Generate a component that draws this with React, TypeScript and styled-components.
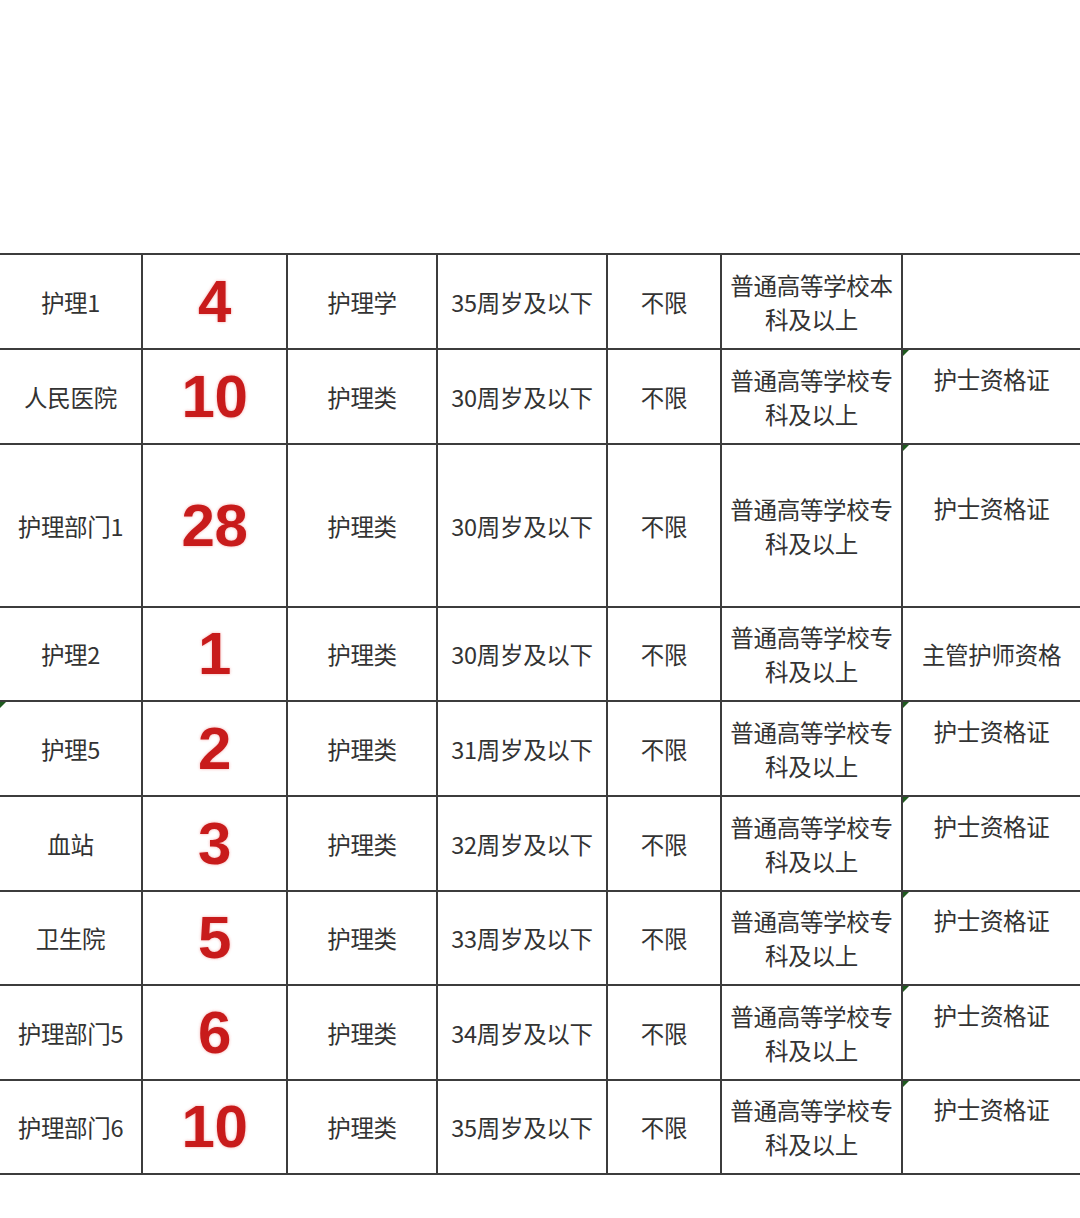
import React from "react";
import styled, { createGlobalStyle } from "styled-components";

interface Post {
  unit: string;
  count: number;
  major: string;
  age: string;
  edu: string;
  cert: string;
  raised: boolean;
  marker: boolean;
  leftMarker?: boolean;
}

const posts: Post[] = [
  { unit: "护理1", count: 4, major: "护理学", age: "35周岁及以下", edu: "本", cert: "", raised: false, marker: false },
  { unit: "人民医院", count: 10, major: "护理类", age: "30周岁及以下", edu: "专", cert: "护士资格证", raised: true, marker: true },
  { unit: "护理部门1", count: 28, major: "护理类", age: "30周岁及以下", edu: "专", cert: "护士资格证", raised: true, marker: true },
  { unit: "护理2", count: 1, major: "护理类", age: "30周岁及以下", edu: "专", cert: "主管护师资格", raised: false, marker: false },
  { unit: "护理5", count: 2, major: "护理类", age: "31周岁及以下", edu: "专", cert: "护士资格证", raised: true, marker: true, leftMarker: true },
  { unit: "血站", count: 3, major: "护理类", age: "32周岁及以下", edu: "专", cert: "护士资格证", raised: true, marker: true },
  { unit: "卫生院", count: 5, major: "护理类", age: "33周岁及以下", edu: "专", cert: "护士资格证", raised: true, marker: true },
  { unit: "护理部门5", count: 6, major: "护理类", age: "34周岁及以下", edu: "专", cert: "护士资格证", raised: true, marker: true },
  { unit: "护理部门6", count: 10, major: "护理类", age: "35周岁及以下", edu: "专", cert: "护士资格证", raised: true, marker: true },
];

const GlobalStyle = createGlobalStyle`
  body {
    margin: 0;
    background: #ffffff;
    font-family: "Noto Sans CJK SC", "Noto Sans", sans-serif;
  }
`;

const Page = styled.div`
  width: 1080px;
  padding-top: 253px;
  padding-bottom: 43px;
`;

const Grid = styled.div`
  display: grid;
  grid-template-columns: 141px 143px 148px 168px 112px 179px 177px;
  grid-template-rows: 93px 93px 161px 92px 93px 93px 92px 93px 92px;
  gap: 2px;
  padding: 2px 0;
  background: #3c3c3c;
`;

const Row = styled.div`
  display: contents;
`;

const Cell = styled.div<{ $raised?: boolean; $marker?: boolean }>`
  position: relative;
  display: flex;
  align-items: center;
  justify-content: center;
  text-align: center;
  background: #ffffff;
  color: #333333;
  font-size: 23.5px;
  line-height: 34px;
  letter-spacing: -0.3px;
  padding-bottom: ${({ $raised }) => ($raised ? "36px" : "0")};

  &::before {
    content: "";
    display: ${({ $marker }) => ($marker ? "block" : "none")};
    position: absolute;
    left: 0;
    top: 0;
    border-top: 6px solid #1f5a1f;
    border-right: 6px solid transparent;
  }
`;

const Count = styled.span`
  font-family: "Liberation Sans", Arial, sans-serif;
  font-weight: 700;
  font-size: 60px;
  line-height: 1;
  color: #c81b1b;
  text-shadow: 0 0 3px rgba(230, 60, 60, 0.45);
`;

const Edu = styled.span`
  display: block;
  white-space: nowrap;
`;

export default function App() {
  return (
    <Page>
      <GlobalStyle />
      <Grid>
        {posts.map((p, i) => (
          <Row key={i}>
            <Cell $marker={p.leftMarker}>{p.unit}</Cell>
            <Cell>
              <Count>{p.count}</Count>
            </Cell>
            <Cell>{p.major}</Cell>
            <Cell>{p.age}</Cell>
            <Cell>不限</Cell>
            <Cell>
              <div>
                <Edu>普通高等学校{p.edu}</Edu>
                <Edu>科及以上</Edu>
              </div>
            </Cell>
            <Cell $raised={p.raised} $marker={p.marker}>
              {p.cert}
            </Cell>
          </Row>
        ))}
      </Grid>
    </Page>
  );
}
